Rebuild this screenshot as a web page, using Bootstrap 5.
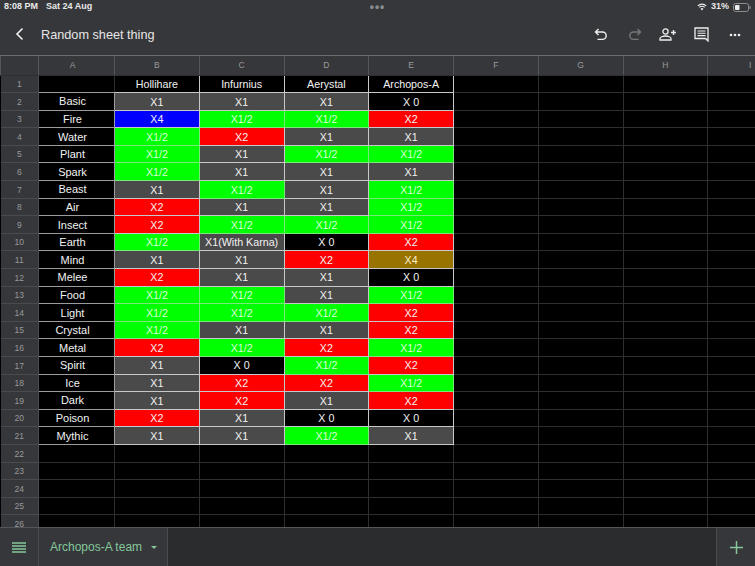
<!DOCTYPE html>
<html lang="en">
<head>
<meta charset="utf-8">
<link href="https://cdn.jsdelivr.net/npm/bootstrap@5.3.0/dist/css/bootstrap.min.css" rel="stylesheet">
<style>
html,body{height:100%;overflow:hidden;background:#000}
body{font-family:"Liberation Sans",Arial,sans-serif;color:#fff}
.shell{width:755px;height:566px}
.topbar{height:56px;background:#36373a;border-bottom:1px solid #6c6d6f}
.stat{height:14px;font-size:9px;font-weight:600;padding:0 4px;color:#e8e8e8}
.stat>div{flex:1 1 0}
.dots3{letter-spacing:1px;color:#8b8c8e;font-size:12px;line-height:1;text-align:center}
.titlerow{height:41px;padding-left:15px;padding-right:3px}
.doc-name{font-size:12.7px;color:#e6e6e6;margin-left:17px;padding-top:2px}
.tool{width:33.5px;height:24px;display:flex;align-items:center;justify-content:center}
.sheetwrap{flex:1 1 auto;overflow:hidden;background:#000}
.sheet{table-layout:fixed;border-collapse:collapse;width:792px}
.sheet td,.sheet th{padding:0;text-align:center;vertical-align:middle;font-weight:400;border:1px solid #2d2e30;overflow:hidden;white-space:nowrap}
.sheet tr{height:17.6px}
.sheet .colhead{height:19px}
.sheet .colhead th{background:#36373a;color:#9a9b9d;font-size:8.5px;border-color:#55565a;border-top:0;border-bottom-color:#2d2e30}
.sheet .rn{background:#36373a;color:#98999b;font-size:8.5px;border-color:#4a4b4e;border-left:0}
.sheet td{background:#000;color:#f2f2f2;font-size:10.7px;line-height:1;padding-top:1px}
.sheet .colhead .cola,.sheet td.lab{padding-right:8px}
.sheet td.lab{font-size:11px;background:#000;border-color:#9d9d9d}
.sheet td.topleft{border-bottom-color:#9d9d9d}
.sheet td.h{border-color:#c8c8c8;border-top-color:#000}
.sheet td.n,.sheet td.g,.sheet td.r,.sheet td.b,.sheet td.k,.sheet td.o{border-color:#c8c8c8}
.sheet td.n{background:#4a4a4a}
.sheet td.g{background:#00ff00;color:#d9ffd9;border-color:#7be87b}
.sheet td.r{background:#ff0000}
.sheet td.b{background:#0000ff}
.sheet td.k{background:#000}
.sheet td.o{background:#997300;color:#fbefc8}
.tabbar{height:39px;background:#2b2c2e;border-top:1px solid #55565a}
.menu-btn{width:39px;border-right:1px solid #4a4b4e;background:#36373a}
.sheet-tab{width:129px;background:#36373a;border-right:1px solid #4a4b4e;color:#84c79a;font-size:12px;padding-left:11px;gap:9px}
.add-btn{width:39px;background:#36373a;border-left:1px solid #4a4b4e}
.caret-dn{width:0;height:0;border-left:3.5px solid transparent;border-right:3.5px solid transparent;border-top:3.5px solid #84c79a}
</style>
</head>
<body>
<div class="shell d-flex flex-column">
  <header class="topbar flex-shrink-0">
    <div class="stat d-flex align-items-center justify-content-between">
      <div class="d-flex gap-2"><span>8:08 PM</span><span>Sat 24 Aug</span></div>
      <div class="dots3">•••</div>
      <div class="d-flex align-items-center justify-content-end gap-1">
        <svg width="10" height="8" viewBox="0 0 12 9"><path d="M1 3.2a7 7 0 0 1 10 0M2.800 5a4.400 4.400 0 0 1 6.400 0" fill="none" stroke="#eee" stroke-width="1.400"/><path d="M6 8.600 4.300 6.700a2.400 2.400 0 0 1 3.400 0z" fill="#eee"/></svg>
        <span>31%</span>
        <svg width="18" height="9" viewBox="0 0 18 9"><rect x=".5" y=".5" width="15" height="8" rx="2" fill="none" stroke="#8b8c8e"/><rect x="2" y="2" width="4.500" height="5" rx=".8" fill="#eee"/><rect x="16.400" y="3" width="1.200" height="3" fill="#8b8c8e"/></svg>
      </div>
    </div>
    <div class="titlerow d-flex align-items-center justify-content-between">
      <div class="d-flex align-items-center">
        <svg width="9" height="14" viewBox="0 0 9 14"><path d="M7.500 1.500 2 7l5.500 5.500" fill="none" stroke="#f0f0f0" stroke-width="1.600"/></svg>
        <span class="doc-name">Random sheet thing</span>
      </div>
      <div class="d-flex align-items-center">
        <div class="tool"><svg width="14" height="13" viewBox="0 0 14 13"><path d="M4.500 1 1.500 4l3 3M2 4h6.500a3.700 3.700 0 0 1 0 7.400H3.500" fill="none" stroke="#eee" stroke-width="1.400"/></svg></div>
        <div class="tool"><svg width="14" height="13" viewBox="0 0 14 13"><path d="M9.500 1l3 3-3 3M12 4H5.500a3.700 3.700 0 0 0 0 7.400H10.500" fill="none" stroke="#77787a" stroke-width="1.400"/></svg></div>
        <div class="tool"><svg width="18" height="13" viewBox="0 0 18 13"><circle cx="6.500" cy="3.500" r="2.600" fill="none" stroke="#eee" stroke-width="1.300"/><path d="M1 12v-1.400c0-1.500 2.800-2.600 5.500-2.600s5.500 1.100 5.500 2.600V12z" fill="none" stroke="#eee" stroke-width="1.300"/><path d="M14.500 2v5M12 4.500h5" stroke="#eee" stroke-width="1.400"/></svg></div>
        <div class="tool"><svg width="15" height="15" viewBox="0 0 15 15"><path d="M1 1h13v13l-2.500-2.500H1z" fill="none" stroke="#eee" stroke-width="1.300"/><path d="M3.500 4h8M3.500 6.300h8M3.500 8.600h8" stroke="#eee" stroke-width="1.100"/></svg></div>
        <div class="tool"><svg width="12" height="4" viewBox="0 0 12 4"><circle cx="2" cy="2" r="1.300" fill="#eee"/><circle cx="6" cy="2" r="1.300" fill="#eee"/><circle cx="10" cy="2" r="1.300" fill="#eee"/></svg></div>
      </div>
    </div>
  </header>
  <main class="sheetwrap">
    <table class="sheet">
      <colgroup><col style="width:38px"><col style="width:76px"><col span="8" style="width:84.75px"></colgroup>
      <tr class="colhead"><th></th><th class="cola">A</th><th>B</th><th>C</th><th>D</th><th>E</th><th>F</th><th>G</th><th>H</th><th>I</th></tr>
      <tr><td class="rn">1</td><td class="topleft"></td><td class="h">Hollihare</td><td class="h">Infurnius</td><td class="h">Aerystal</td><td class="h">Archopos-A</td><td></td><td></td><td></td><td></td></tr>
      <tr><td class="rn">2</td><td class="lab">Basic</td><td class="n">X1</td><td class="n">X1</td><td class="n">X1</td><td class="k">X 0</td><td></td><td></td><td></td><td></td></tr>
      <tr><td class="rn">3</td><td class="lab">Fire</td><td class="b">X4</td><td class="g">X1/2</td><td class="g">X1/2</td><td class="r">X2</td><td></td><td></td><td></td><td></td></tr>
      <tr><td class="rn">4</td><td class="lab">Water</td><td class="g">X1/2</td><td class="r">X2</td><td class="n">X1</td><td class="n">X1</td><td></td><td></td><td></td><td></td></tr>
      <tr><td class="rn">5</td><td class="lab">Plant</td><td class="g">X1/2</td><td class="n">X1</td><td class="g">X1/2</td><td class="g">X1/2</td><td></td><td></td><td></td><td></td></tr>
      <tr><td class="rn">6</td><td class="lab">Spark</td><td class="g">X1/2</td><td class="n">X1</td><td class="n">X1</td><td class="n">X1</td><td></td><td></td><td></td><td></td></tr>
      <tr><td class="rn">7</td><td class="lab">Beast</td><td class="n">X1</td><td class="g">X1/2</td><td class="n">X1</td><td class="g">X1/2</td><td></td><td></td><td></td><td></td></tr>
      <tr><td class="rn">8</td><td class="lab">Air</td><td class="r">X2</td><td class="n">X1</td><td class="n">X1</td><td class="g">X1/2</td><td></td><td></td><td></td><td></td></tr>
      <tr><td class="rn">9</td><td class="lab">Insect</td><td class="r">X2</td><td class="g">X1/2</td><td class="g">X1/2</td><td class="g">X1/2</td><td></td><td></td><td></td><td></td></tr>
      <tr><td class="rn">10</td><td class="lab">Earth</td><td class="g">X1/2</td><td class="n">X1(With Karna)</td><td class="k">X 0</td><td class="r">X2</td><td></td><td></td><td></td><td></td></tr>
      <tr><td class="rn">11</td><td class="lab">Mind</td><td class="n">X1</td><td class="n">X1</td><td class="r">X2</td><td class="o">X4</td><td></td><td></td><td></td><td></td></tr>
      <tr><td class="rn">12</td><td class="lab">Melee</td><td class="r">X2</td><td class="n">X1</td><td class="n">X1</td><td class="k">X 0</td><td></td><td></td><td></td><td></td></tr>
      <tr><td class="rn">13</td><td class="lab">Food</td><td class="g">X1/2</td><td class="g">X1/2</td><td class="n">X1</td><td class="g">X1/2</td><td></td><td></td><td></td><td></td></tr>
      <tr><td class="rn">14</td><td class="lab">Light</td><td class="g">X1/2</td><td class="g">X1/2</td><td class="g">X1/2</td><td class="r">X2</td><td></td><td></td><td></td><td></td></tr>
      <tr><td class="rn">15</td><td class="lab">Crystal</td><td class="g">X1/2</td><td class="n">X1</td><td class="n">X1</td><td class="r">X2</td><td></td><td></td><td></td><td></td></tr>
      <tr><td class="rn">16</td><td class="lab">Metal</td><td class="r">X2</td><td class="g">X1/2</td><td class="r">X2</td><td class="g">X1/2</td><td></td><td></td><td></td><td></td></tr>
      <tr><td class="rn">17</td><td class="lab">Spirit</td><td class="n">X1</td><td class="k">X 0</td><td class="g">X1/2</td><td class="r">X2</td><td></td><td></td><td></td><td></td></tr>
      <tr><td class="rn">18</td><td class="lab">Ice</td><td class="n">X1</td><td class="r">X2</td><td class="r">X2</td><td class="g">X1/2</td><td></td><td></td><td></td><td></td></tr>
      <tr><td class="rn">19</td><td class="lab">Dark</td><td class="n">X1</td><td class="r">X2</td><td class="n">X1</td><td class="r">X2</td><td></td><td></td><td></td><td></td></tr>
      <tr><td class="rn">20</td><td class="lab">Poison</td><td class="r">X2</td><td class="n">X1</td><td class="k">X 0</td><td class="k">X 0</td><td></td><td></td><td></td><td></td></tr>
      <tr><td class="rn">21</td><td class="lab">Mythic</td><td class="n">X1</td><td class="n">X1</td><td class="g">X1/2</td><td class="n">X1</td><td></td><td></td><td></td><td></td></tr>
      <tr><td class="rn">22</td><td></td><td></td><td></td><td></td><td></td><td></td><td></td><td></td><td></td></tr>
      <tr><td class="rn">23</td><td></td><td></td><td></td><td></td><td></td><td></td><td></td><td></td><td></td></tr>
      <tr><td class="rn">24</td><td></td><td></td><td></td><td></td><td></td><td></td><td></td><td></td><td></td></tr>
      <tr><td class="rn">25</td><td></td><td></td><td></td><td></td><td></td><td></td><td></td><td></td><td></td></tr>
      <tr><td class="rn">26</td><td></td><td></td><td></td><td></td><td></td><td></td><td></td><td></td><td></td></tr>
    </table>
  </main>
  <footer class="tabbar flex-shrink-0 d-flex">
    <div class="menu-btn d-flex align-items-center justify-content-center">
      <svg width="14" height="11" viewBox="0 0 14 11"><path d="M0 1h14M0 4h14M0 7h14M0 10h14" stroke="#84c79a" stroke-width="1.300"/></svg>
    </div>
    <div class="sheet-tab d-flex align-items-center"><span>Archopos-A team</span><span class="caret-dn"></span></div>
    <div class="flex-grow-1"></div>
    <div class="add-btn d-flex align-items-center justify-content-center">
      <svg width="13" height="13" viewBox="0 0 13 13"><path d="M6.500 0v13M0 6.500h13" stroke="#84c79a" stroke-width="1.500"/></svg>
    </div>
  </footer>
</div>
</body>
</html>
